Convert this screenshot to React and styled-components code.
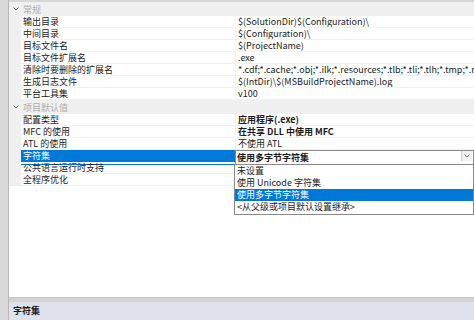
import React from 'react'
import styled, { createGlobalStyle } from 'styled-components'

const Global = createGlobalStyle`
  html, body { margin: 0; padding: 0; background: #fff; }
  body { font-family: "Noto Sans CJK SC", "Noto Sans", sans-serif; }
`

const groups = [
  {
    title: '常规',
    rows: [
      ['输出目录', '$(SolutionDir)$(Configuration)\\'],
      ['中间目录', '$(Configuration)\\'],
      ['目标文件名', '$(ProjectName)'],
      ['目标文件扩展名', '.exe'],
      ['清除时要删除的扩展名', '*.cdf;*.cache;*.obj;*.ilk;*.resources;*.tlb;*.tli;*.tlh;*.tmp;*.rsp;*.'],
      ['生成日志文件', '$(IntDir)\\$(MSBuildProjectName).log'],
      ['平台工具集', 'v100'],
    ],
  },
  {
    title: '项目默认值',
    rows: [
      ['配置类型', '应用程序(.exe)', true],
      ['MFC 的使用', '在共享 DLL 中使用 MFC', true],
      ['ATL 的使用', '不使用 ATL'],
      ['字符集', '使用多字节字符集', true, 'combo'],
      ['公共语言运行时支持', ''],
      ['全程序优化', ''],
    ],
  },
]

const options = ['未设置', '使用 Unicode 字符集', '使用多字节字符集', '<从父级或项目默认设置继承>']

const Page = styled.div`
  width: 474px;
  height: 320px;
  display: flex;
  overflow: hidden;
  font-size: 9px;
  color: #1a1a1a;
`

const LeftStrip = styled.div`
  width: 8px;
  background: #dadada;
  border-right: 1px solid #b8b8b8;
  flex: none;
`

const Main = styled.div`
  flex: 1;
  min-width: 0;
  display: flex;
  flex-direction: column;
`

const TopEdge = styled.div`
  height: 2px;
  background: #d6d6d6;
  flex: none;
`

const Grid = styled.div`
  flex: 1;
  position: relative;
  background: #fff;
`

const CatRow = styled.div`
  height: 14px;
  display: flex;
  align-items: center;
  background: #f0f0f0;
  color: #adadad;
`

const Chevron = styled.span`
  width: 14px;
  display: flex;
  justify-content: center;
`

const Row = styled.div`
  height: 12px;
  display: grid;
  grid-template-columns: 12px 214px 1fr;
  background: ${p => (p.$sel ? '#0078d7' : '#fff')};
`

const Gutter = styled.div`
  background: #f0f0f0;
`

const Name = styled.div`
  padding-left: 2px;
  line-height: 12px;
  white-space: nowrap;
  overflow: hidden;
  color: ${p => (p.$sel ? '#fff' : '#1a1a1a')};
  border-bottom: 1px solid ${p => (p.$sel ? '#0078d7' : '#f2f2f2')};
  box-sizing: border-box;
`

const Value = styled.div`
  padding-left: 2px;
  line-height: 12px;
  white-space: nowrap;
  overflow: hidden;
  background: #fff;
  font-weight: ${p => (p.$bold ? 700 : 400)};
  border-left: 1px solid #f2f2f2;
  border-bottom: 1px solid #f2f2f2;
  box-sizing: border-box;
`

const Combo = styled.div`
  position: relative;
  background: #fff;
  border: 1px solid #8a8a8a;
  box-sizing: border-box;
  display: flex;
  align-items: center;
  padding-left: 1px;
  font-weight: 700;
  white-space: nowrap;
`

const DropBtn = styled.div`
  position: absolute;
  right: 1px;
  top: 0;
  width: 10px;
  height: 10px;
  background: #f0f0f0;
  border-left: 1px solid #cfcfcf;
  display: flex;
  align-items: center;
  justify-content: center;
`

const List = styled.div`
  position: absolute;
  left: 225px;
  right: 0;
  top: 162px;
  background: #fff;
  border: 1px solid #8a8a8a;
  padding-bottom: 1px;
`

const Option = styled.div`
  height: 12px;
  line-height: 12px;
  padding-left: 2px;
  white-space: nowrap;
  background: ${p => (p.$sel ? '#0078d7' : 'transparent')};
  color: ${p => (p.$sel ? '#fff' : '#1a1a1a')};
`

const Split = styled.div`
  height: 4px;
  background: #d4d4d4;
  border-top: 1px solid #c4c4c4;
  flex: none;
`

const Desc = styled.div`
  height: 18px;
  background: #dfe2ec;
  padding-left: 4px;
  line-height: 18px;
  font-weight: 700;
  flex: none;
`

const Arrow = () => (
  <svg width="6" height="4" viewBox="0 0 6 4">
    <path d="M0.5 0.5 L3 3 L5.5 0.5" fill="none" stroke="#6a6a6a" strokeWidth="1" />
  </svg>
)

export default function App() {
  return (
    <Page>
      <Global />
      <LeftStrip />
      <Main>
        <TopEdge />
        <Grid>
          {groups.map(g => (
            <div key={g.title}>
              <CatRow>
                <Chevron><Arrow /></Chevron>
                {g.title}
              </CatRow>
              {g.rows.map(([name, value, bold, kind]) => (
                <Row key={name} $sel={kind === 'combo'}>
                  <Gutter />
                  <Name $sel={kind === 'combo'}>{name}</Name>
                  {kind === 'combo' ? (
                    <Combo>
                      {value}
                      <DropBtn><Arrow /></DropBtn>
                    </Combo>
                  ) : (
                    <Value $bold={bold}>{value}</Value>
                  )}
                </Row>
              ))}
            </div>
          ))}
          <List>
            {options.map((o, i) => (
              <Option key={o} $sel={i === 2}>{o}</Option>
            ))}
          </List>
        </Grid>
        <Split />
        <Desc>字符集</Desc>
      </Main>
    </Page>
  )
}
